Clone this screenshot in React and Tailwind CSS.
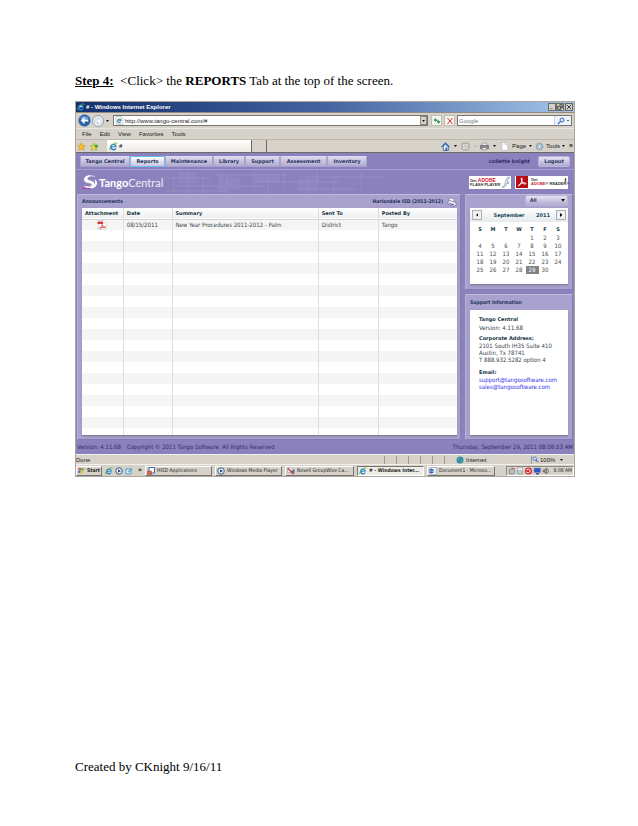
// src/App.jsx
// Step 4 of the handout: the Tango Central home screen inside a browser window.

import React, { useState } from 'react';

const navItems = [
  { label: 'Tango Central', width: 'w-[50px]' },
  { label: 'Reports', width: 'w-[35px]' },
  { label: 'Maintenance', width: 'w-[48px]' },
  { label: 'Library', width: 'w-8' },
  { label: 'Support', width: 'w-[35px]' },
  { label: 'Assessment', width: 'w-[47px]' },
  { label: 'Inventory', width: 'w-10' },
];

const weekDays = ['S', 'M', 'T', 'W', 'T', 'F', 'S'];

// September 2011 starts on a Thursday
const weeks = [
  ['', '', '', '', 1, 2, 3],
  [4, 5, 6, 7, 8, 9, 10],
  [11, 12, 13, 14, 15, 16, 17],
  [18, 19, 20, 21, 22, 23, 24],
  [25, 26, 27, 28, 29, 30, ''],
];

const emptyRows = Array.from({ length: 19 }, (_, i) => i);

const IeIcon = ({ className = 'size-2' }) => (
  <svg viewBox="0 0 16 16" className={`shrink-0 ${className}`} aria-hidden="true">
    <path d="M13.5 9.5H5.2c.2 2 1.500 2.800 3 2.800 1.200 0 2-.5 2.600-1.400h2.500C12.500 13.300 10.600 15 8 15c-3.500 0-6-2.500-6-6s2.500-6 6-6 5.800 2.600 5.500 6.500z" fill="#2f86c8" />
    <path d="M5.300 7.500h5.300C10.300 6 9.400 5.300 8 5.300S5.700 6 5.300 7.500z" fill="#e8f6ff" />
    <path d="M2 14.500C-.5 12 4 5 9 2.500c3-1.500 6-1.500 5.500 1.500" fill="none" stroke="#66ad3e" strokeWidth="1.500" />
  </svg>
);

const PageIcon = () => (
  <svg viewBox="0 0 16 16" className="size-[9px] shrink-0" aria-hidden="true">
    <path d="M3 1h7l4 4v10H3z" fill="#fff" stroke="#a4a8b0" />
    <path d="M10 1v4h4" fill="#dfe6f2" stroke="#a4a8b0" />
    <circle cx="4" cy="6" r="2" fill="#d9dde4" />
  </svg>
);

const SiteIcon = () => (
  <svg viewBox="0 0 16 16" className="size-[9px] shrink-0" aria-hidden="true">
    <path d="M2 1h9l3 3v11H2z" fill="#fff" stroke="#9aa0aa" />
    <path d="M11 8.500H6.500M11 8.500A3.200 3.200 0 1 0 10 11" fill="none" stroke="#2f7fc0" strokeWidth="1.800" />
    <path d="M4 12c0-3 3-7 8-7" fill="none" stroke="#5fa84a" />
  </svg>
);

const MediaIcon = () => (
  <svg viewBox="0 0 16 16" className="size-2 shrink-0" aria-hidden="true">
    <circle cx="8" cy="8" r="6.500" fill="#f2f7fb" stroke="#345a86" strokeWidth="2" />
    <path d="M6 4.500l6 3.500-6 3.500z" fill="#28517f" />
  </svg>
);

const Caret = ({ className = 'w-[3px]' }) => (
  <svg viewBox="0 0 6 4" className={`shrink-0 ${className}`} aria-hidden="true">
    <path d="M0 0h6L3 4z" fill="#111" />
  </svg>
);

const TitleBar = () => (
  <div className="flex h-[10px] items-center bg-linear-to-r from-[#14306f] via-[#44639f] to-[#a5c6e9] px-px">
    <IeIcon />
    <span className="ml-px flex-1 font-['Liberation_Sans',sans-serif] text-[6px] leading-none font-bold text-white">
      # - Windows Internet Explorer
    </span>
    <div className="flex">
      <button type="button" aria-label="Minimize" className="flex h-2 w-2 items-end border border-[#6b6a65] bg-[#d6d2c9] p-px">
        <svg viewBox="0 0 6 5"><path d="M0 4h4v1H0z" /></svg>
      </button>
      <button type="button" aria-label="Restore" className="flex h-2 w-2 items-center border border-[#6b6a65] bg-[#d6d2c9]">
        <svg viewBox="0 0 8 8"><path d="M3 1h4v4H5M1 3h4v4H1z" fill="none" stroke="#111" /></svg>
      </button>
      <button type="button" aria-label="Close" className="ml-px flex h-2 w-2 items-center border border-[#6b6a65] bg-[#d6d2c9]">
        <svg viewBox="0 0 8 8"><path d="M1 1l6 6M7 1L1 7" stroke="#111" /></svg>
      </button>
    </div>
  </div>
);

const AddressBar = () => (
  <div className="flex h-4 items-center border-t border-[#8f8c84] px-[2px] font-['Liberation_Sans',sans-serif]">
    <button type="button" aria-label="Back">
      <svg viewBox="0 0 24 24" className="size-[13px]">
        <circle cx="12" cy="12" r="11" fill="#2360ae" stroke="#8793a5" />
        <path d="M4 8a9 7 0 0116 0c-4 3-12 3-16 0z" fill="#6fa3dc" />
        <path d="M12 5l-7 7 7 7v-5h7v-4h-7z" fill="#fff" />
      </svg>
    </button>
    <button type="button" aria-label="Forward" className="ml-px">
      <svg viewBox="0 0 24 24" className="size-3">
        <circle cx="12" cy="12" r="11" fill="#e9eef4" stroke="#7d8791" strokeWidth="1.500" />
        <path d="M12 5l7 7-7 7v-5H5v-4h7z" fill="#fff" stroke="#93a9c2" />
      </svg>
    </button>
    <Caret className="ml-[2px] w-[3px]" />
    <div className="ml-1 flex h-[11px] flex-1 items-center border border-[#77756f] bg-white pl-px">
      <SiteIcon />
      <input aria-label="Address" defaultValue="http://www.tango-central.com/#" className="w-0 flex-1 pl-px text-[6px] leading-none text-[#222] outline-none" />
      <button type="button" aria-label="Show addresses" className="flex h-[9px] w-[7px] items-center justify-center border border-[#8d8a83] bg-[#d6d2c9]">
        <Caret />
      </button>
    </div>
    <button type="button" aria-label="Refresh" className="ml-[3px] flex size-[11px] items-center justify-center border border-[#c1beb6] bg-[#f4f3ef]">
      <svg viewBox="0 0 16 16" className="size-2">
        <path d="M1 6l5-4v3h3v3H6v2zM15 10l-5 4v-3H8V8h2V6z" fill="#2d9c4d" />
      </svg>
    </button>
    <button type="button" aria-label="Stop" className="ml-[2px] flex size-[11px] items-center justify-center border border-[#c1beb6] bg-[#f4f3ef]">
      <svg viewBox="0 0 16 16" className="size-2">
        <path d="M3 2l10 12M13 2L3 14" stroke="#d03b3b" strokeWidth="2" />
      </svg>
    </button>
    <div className="ml-[2px] flex h-[11px] w-[115px] items-center border border-[#77756f] bg-white">
      <input aria-label="Search" placeholder="Google" className="w-0 flex-1 pl-px text-[6px] leading-none outline-none placeholder:text-[#777]" />
      <button type="button" aria-label="Search Google" className="flex h-[9px] items-center gap-[2px] border-l border-[#c9d3e2] bg-[#eef3fa] px-[2px]">
        <svg viewBox="0 0 16 16" className="size-2">
          <circle cx="10" cy="6" r="4" fill="#dbe9fb" stroke="#3c6fc4" strokeWidth="2" />
          <path d="M7 9l-5 5" stroke="#3c6fc4" strokeWidth="2.500" />
        </svg>
        <Caret className="w-[2px]" />
      </button>
    </div>
  </div>
);

const MenuBar = () => (
  <div className="flex h-[11px] items-center border-t border-[#e9e7e1] pl-[6px] font-['Liberation_Sans',sans-serif] text-[6px] leading-none text-[#222]">
    <div className="flex gap-2">
      {['File', 'Edit', 'View', 'Favorites', 'Tools'].map((item) => (
        <button type="button" key={item}>{item}</button>
      ))}
    </div>
  </div>
);

const ToolBar = () => (
  <div className="flex h-[14px] items-center border-t border-b border-t-[#bcb8ae] border-b-[#6d6a63] pl-px font-['Liberation_Sans',sans-serif] text-[6px] leading-none text-[#222]">
    <button type="button" aria-label="Favorites">
      <svg viewBox="0 0 16 16" className="size-[9px]">
        <path d="M8 1l2 5 5 .5-4 3.500 1.500 5L8 12l-4.500 3L5 10 1 6.500 6 6z" fill="#ffc21f" stroke="#d18a12" />
      </svg>
    </button>
    <button type="button" aria-label="Add to favorites" className="ml-1">
      <svg viewBox="0 0 16 16" className="size-[9px]">
        <path d="M7 2l2 4.500 6 .5-4.500 3.500 1 4.500L7 12.500 2.500 15l1-4.500L0 7l5-.5z" fill="#f4d84a" stroke="#7fa32a" />
        <path d="M10 4h2v2h2v3h-2v2h-2V9H8V6h2z" fill="#3da23a" />
      </svg>
    </button>
    <div className="ml-2 flex h-3 w-[145px] items-center border-r border-[#6d6a63] bg-linear-to-b from-white to-[#edeae4] pl-[2px]">
      <IeIcon className="size-[9px]" />
      <span className="ml-px font-bold">#</span>
    </div>
    <button type="button" aria-label="New tab" className="h-3 w-[15px] border-r border-[#6d6a63]"></button>
    <div className="flex flex-1 items-center justify-end">
      <button type="button" aria-label="Home" className="flex items-center gap-1">
        <svg viewBox="0 0 16 16" className="size-[9px]">
          <path d="M1 8l7-7 7 7h-2v7H4V8z" fill="#e8effa" stroke="#335b9c" strokeWidth="1.500" />
          <path d="M1 8l7-7 7 7-3 1-4-4-4 4z" fill="#4c78bb" />
          <path d="M8 10h3v5H8z" fill="#345a91" />
        </svg>
        <Caret />
      </button>
      <button type="button" aria-label="Feeds" className="ml-1 flex items-center gap-1">
        <svg viewBox="0 0 16 16" className="size-[9px]">
          <rect x="2" y="2" width="12" height="12" rx="2" fill="#dedbd4" stroke="#8e8b84" strokeWidth="1.500" />
          <path d="M5 5a6 6 0 016 6M5 8a3 3 0 013 3" fill="none" stroke="#aaa69e" />
        </svg>
        <span className="text-[#666]">-</span>
      </button>
      <button type="button" aria-label="Print" className="ml-1 flex items-center gap-1">
        <svg viewBox="0 0 16 16" className="size-[9px]">
          <path d="M4 2h8v5H4z" fill="#fff" stroke="#777" />
          <path d="M1 6h14v6H1z" fill="#85898e" stroke="#555" />
          <path d="M4 10h8v4H4z" fill="#e8e8e8" stroke="#777" />
        </svg>
        <Caret />
      </button>
      <button type="button" className="ml-1 flex items-center gap-[3px]">
        <PageIcon />
        Page
        <Caret />
      </button>
      <button type="button" className="ml-[3px] flex items-center gap-[2px]">
        <svg viewBox="0 0 16 16" className="size-[9px]">
          <circle cx="8" cy="8" r="5.500" fill="#c9d8e5" stroke="#7c92a6" strokeWidth="2.500" strokeDasharray="3 1" />
          <circle cx="8" cy="8" r="2" fill="#eef4f8" stroke="#8097ac" />
        </svg>
        Tools
        <Caret />
      </button>
      <span className="ml-1 self-start pr-px text-[7px] font-bold">»</span>
    </div>
  </div>
);

const AppNav = ({ active, onSelect }) => (
  <nav className="flex h-[17px] items-center border-b border-[#a79dd0] px-1 text-[5px] leading-none font-bold text-[#27335c]">
    {navItems.map(({ label, width }) => (
      <button
        type="button"
        key={label}
        onClick={() => onSelect(label)}
        className={`h-[11px] border ${width} ${
          active === label
            ? 'border-[#67bdf0] bg-linear-to-b from-white to-[#c9c4e2]'
            : 'border-[#a8a1c9] border-t-[#e0dcef] bg-linear-to-b from-[#dcd8ec] to-[#b1aad1]'
        }`}
      >
        {label}
      </button>
    ))}
    <span className="ml-auto text-[#302c66]">collette knight</span>
    <button type="button" className="ml-2 h-[11px] w-8 rounded-xs border border-[#b9b3d6] bg-linear-to-b from-[#e6e3f2] to-[#b1aad1]">
      Logout
    </button>
  </nav>
);

const Banner = () => (
  <div className="relative flex h-6 items-center px-[6px]">
    <svg viewBox="0 0 260 24" className="absolute top-0 left-20 h-6 w-[260px]" aria-hidden="true">
      <g stroke="#a9a0d3" strokeWidth="1" opacity=".45" fill="none">
        <path d="M5 8h50M20 16h90M60 5h70M95 12h90M140 19h60M150 7h80M10 21h60" />
        <path d="M18 4v16M32 1v22M47 8v16M65 2v18M71 6v18M98 0v20M112 8v16M128 2v18M152 4v20M161 1v17M178 9v15M205 3v17" />
      </g>
      <g fill="#9c93cb" opacity=".3">
        <path d="M22 2h18v11H22zM62 7h22v13H62zM99 3h25v9H99zM142 9h20v12h-20z" />
      </g>
    </svg>
    <svg viewBox="0 0 32 32" className="size-4 shrink-0" aria-hidden="true">
      <path d="M28 7C20-1 4 2 4 11c0 6 7 7 13 8 4 1 3 4-2 4 8 2 12-3 8-7-3-3-11-3-12-6C10 6 19 2 28 7z" fill="#fff" />
      <path d="M3 23c7 9 24 8 27-3 1-5-2-8-6-9 5 5 1 12-5 13-6 2-11 1-16-1z" fill="#fff" />
      <path d="M0 29h17" stroke="#b13aa8" strokeWidth="2" />
    </svg>
    <span className="ml-px font-[Lato,sans-serif] text-[11px] leading-none text-[#eeecf8]">
      <b className="text-white">Tango</b>Central
    </span>
    <div className="ml-auto flex gap-1">
      <a href="#flash" className="flex h-[13px] w-[42px] items-center bg-white px-px text-[4px] leading-none font-bold text-[#333]">
        <span className="flex-1 font-['Liberation_Sans',sans-serif]">
          <span className="block whitespace-nowrap">Get <span className="text-[5px] text-[#d4202c]">ADOBE</span></span>
          <span className="block whitespace-nowrap">FLASH PLAYER</span>
        </span>
        <svg viewBox="0 0 16 24" className="h-3 w-2 shrink-0" aria-hidden="true">
          <path d="M14 2C8 3 8 10 6 16c-1 4-3 5-5 5v2c5 0 7-3 8-8h4v-3h-3c1-4 2-6 4-6z" fill="#fff" stroke="#7295b0" strokeWidth="1.500" />
        </svg>
      </a>
      <a href="#reader" className="flex h-[13px] w-[53px] items-center bg-white text-[4px] leading-none font-bold text-[#333]">
        <svg viewBox="0 0 24 24" className="ml-px size-3 shrink-0" aria-hidden="true">
          <path d="M0 0h24v24H0z" fill="#b40d16" />
          <path d="M4 20c5-2 9-9 8-16-2-1-2 3 0 7 3 6 7 6 8 4-1-3-11-1-16 5z" fill="none" stroke="#fff" strokeWidth="2" />
        </svg>
        <span className="ml-[3px] flex-1 font-['Liberation_Sans',sans-serif]">
          <span className="flex justify-between pr-[2px]">
            Get
            <svg viewBox="0 0 6 10" className="h-1 w-[3px]" aria-hidden="true">
              <path d="M2 0h2v4h2L3 8 0 4h2zM0 9h6v1H0z" fill="#333" />
            </svg>
          </span>
          <span className="block whitespace-nowrap"><span className="text-[#d4202c]">ADOBE</span>® READER®</span>
        </span>
      </a>
    </div>
  </div>
);

const cell = 'border-r border-[#dededf] px-[3px] py-0 text-left';

const Announcements = () => (
  <section className="min-w-0 flex-1 border border-t-[#c2badb] border-r-[#867bb8] border-b-[#867bb8] border-l-[#b6addb] bg-[#aaa2ce] pr-[3px] pb-[3px] pl-1">
    <div className="flex h-[13px] items-center justify-between text-[5px] leading-none font-bold text-[#27335c]">
      <h2>Announcements</h2>
      <div className="flex items-center gap-1">
        Harlandale ISD (2011-2012)
        <button type="button" aria-label="Print announcements">
          <svg viewBox="0 0 20 20" className="size-[10px]">
            <path d="M5 2l9 2-1 7-9-2z" fill="#fff" stroke="#6f7198" />
            <path d="M2 9l4-2 12 4v5l-4 3L2 14z" fill="#e7e8f0" stroke="#4f5282" />
            <path d="M5 13l9 3" stroke="#4f5282" strokeWidth="2" />
          </svg>
        </button>
      </div>
    </div>
    <div className="border-b border-[#827c9c] bg-white shadow-sm">
      <table className="w-full table-fixed border-collapse text-[6px] leading-none text-[#39424c]">
        <colgroup>
          <col className="w-[11%]" />
          <col className="w-[13%]" />
          <col className="w-[39%]" />
          <col className="w-[16%]" />
          <col className="w-[21%]" />
        </colgroup>
        <thead className="font-['DejaVu_Sans',Verdana,sans-serif] text-[5px]">
          <tr className="h-[11px] border-b border-[#d0d4d6] bg-linear-to-b from-white to-[#edf0f1] text-[#17343f]">
            <th className={`${cell} whitespace-nowrap`}>Attachment</th>
            <th className={cell}>Date</th>
            <th className={cell}>Summary</th>
            <th className={cell}>Sent To</th>
            <th className="px-[3px] py-0 text-left">Posted By</th>
          </tr>
        </thead>
        <tbody>
          <tr className="h-[11px] bg-[#f5f5f5]">
            <td className={cell}>
              <a href="#attachment" aria-label="PDF attachment" className="flex justify-center">
                <svg viewBox="0 0 18 18" className="size-[10px]">
                  <path d="M3 1h9l4 4v12H3z" fill="#fff" stroke="#b5b5b5" />
                  <path d="M1 3h10v4H1z" fill="#cf2a2a" />
                  <path d="M5 15c3-1 5-4 4-7 0 4 3 5 6 5-4 0-7 0-10 2z" fill="none" stroke="#d33" strokeWidth="1.500" />
                </svg>
              </a>
            </td>
            <td className={cell}>08/15/2011</td>
            <td className={`${cell} whitespace-nowrap`}>New Year Procedures 2011-2012 - Palm</td>
            <td className={cell}>District</td>
            <td className="px-[3px] py-0">Tango</td>
          </tr>
          {emptyRows.map((row) => (
            <tr key={row} className="h-[11px] last:h-[7px] even:bg-white odd:bg-[#f5f5f5]">
              <td className={cell}></td>
              <td className={cell}></td>
              <td className={cell}></td>
              <td className={cell}></td>
              <td></td>
            </tr>
          ))}
        </tbody>
      </table>
    </div>
  </section>
);

const Calendar = () => (
  <section className="border border-t-[#c2badb] border-r-[#867bb8] border-b-[#867bb8] border-l-[#b6addb] bg-[#aaa2ce] px-1 pb-1">
    <div className="relative ml-auto flex h-[11px] w-[43px] items-center">
      <select aria-label="Calendar filter" className="h-[11px] w-full appearance-none rounded-xs border border-[#b9b3d6] bg-linear-to-b from-[#e6e3f2] to-[#b1aad1] pl-1 text-[5px] leading-none font-bold text-[#27335c]">
        <option>All</option>
      </select>
      <Caret className="pointer-events-none absolute right-[3px] w-1" />
    </div>
    <div className="mt-[2px] h-[77px] border-b border-[#827c9c] bg-white text-[6px] leading-none text-[#39424c] shadow-sm">
      <div className="flex h-[14px] items-center bg-linear-to-b from-white to-[#e6eaeb] px-[2px] font-['DejaVu_Sans',Verdana,sans-serif] text-[5px] font-bold text-[#17445a]">
        <button type="button" aria-label="Previous month" className="flex size-[10px] items-center justify-center border border-[#aab0b3] bg-[#eef0f1]">
          <svg viewBox="0 0 4 6" className="h-1"><path d="M4 0v6L0 3z" /></svg>
        </button>
        <span className="flex-1 text-center">September</span>
        <span className="mr-[6px]">2011</span>
        <button type="button" aria-label="Next month" className="flex size-[10px] items-center justify-center border border-[#aab0b3] bg-[#eef0f1]">
          <svg viewBox="0 0 4 6" className="h-1"><path d="M0 0v6l4-3z" /></svg>
        </button>
      </div>
      <table className="mx-auto mt-[3px] w-[91px] table-fixed text-center">
        <thead className="font-['DejaVu_Sans',Verdana,sans-serif] text-[5px]">
          <tr className="h-[9px] text-[#17343f]">
            {weekDays.map((day, i) => (
              <th key={i} className="p-0">{day}</th>
            ))}
          </tr>
        </thead>
        <tbody>
          {weeks.map((week, i) => (
            <tr key={i} className="h-2 text-[#4b4b4b]">
              {week.map((day, j) => (
                <td key={j} className={day === 29 ? 'bg-[#818181] p-0 text-white' : 'p-0'}>{day}</td>
              ))}
            </tr>
          ))}
        </tbody>
      </table>
    </div>
  </section>
);

const infoHeading = "block font-['DejaVu_Sans',Verdana,sans-serif] text-[5px] text-[#17343f]";

const SupportInfo = () => (
  <section className="flex flex-1 flex-col border border-t-[#c2badb] border-r-[#867bb8] border-b-[#867bb8] border-l-[#b6addb] bg-[#aaa2ce] px-1 pb-[3px]">
    <h2 className="flex h-[15px] items-center text-[5px] leading-none font-bold text-[#27335c]">
      Support Information
    </h2>
    <div className="flex-1 border-b border-[#827c9c] bg-white pt-[6px] pl-[9px] font-['DejaVu_Sans_Condensed','DejaVu_Sans',sans-serif] text-[6px] leading-[7px] whitespace-nowrap text-[#39424c] shadow-sm">
      <b className={infoHeading}>Tango Central</b>
      <p className="mt-px">Version: 4.11.68</p>
      <b className={`mt-1 ${infoHeading}`}>Corporate Address:</b>
      <p>2101 South IH35 Suite 410</p>
      <p>Austin, Tx 78741</p>
      <p>T 888.932.5282 option 4</p>
      <b className={`mt-[6px] ${infoHeading}`}>Email:</b>
      <a href="mailto:support@tangosoftware.com" className="block text-[#3030e8]">support@tangosoftware.com</a>
      <a href="mailto:sales@tangosoftware.com" className="block text-[#3030e8]">sales@tangosoftware.com</a>
    </div>
  </section>
);

const TangoApp = () => {
  const [active, setActive] = useState('Reports');

  return (
    <main className="bg-[#8b81bd] font-['DejaVu_Sans',Verdana,sans-serif]">
      <AppNav active={active} onSelect={setActive} />
      <Banner />
      <div className="flex gap-1 px-px font-['DejaVu_Sans_Condensed','DejaVu_Sans',sans-serif]">
        <Announcements />
        <div className="flex w-[108px] flex-col gap-1">
          <Calendar />
          <SupportInfo />
        </div>
      </div>
      <div className="flex h-[14px] items-center gap-[6px] px-px font-['DejaVu_Sans_Condensed','DejaVu_Sans',sans-serif] text-[6px] leading-none text-[#302c66]">
        <span>Version: 4.11.68</span>
        <span>Copyright © 2011 Tango Software, All Rights Reserved</span>
        <span className="ml-auto">Thursday, September 29, 2011 08:08:53 AM</span>
      </div>
    </main>
  );
};

const StatusBar = () => (
  <div className="flex h-[10px] items-center border-t border-[#f3f1ec] font-['Liberation_Sans',sans-serif] text-[6px] leading-none text-[#222]">
    <span className="flex-1">Done</span>
    {[1, 2, 3, 4, 5, 6].map((pane) => (
      <span key={pane} className="h-2 w-3 border-l border-[#9f9b92]"></span>
    ))}
    <span className="flex w-[75px] items-center gap-[2px]">
      <svg viewBox="0 0 16 16" className="size-2" aria-hidden="true">
        <circle cx="8" cy="8" r="7" fill="#2f83be" />
        <path d="M3 3c4-3 6 0 4 3S4 9 2 8zM9 8c4-1 5 1 3 4l-4 2z" fill="#4fb45a" />
      </svg>
      Internet
    </span>
    <button type="button" className="flex h-2 w-[43px] items-center gap-px border-l border-[#9f9b92]">
      <svg viewBox="0 0 16 16" className="size-[7px]">
        <circle cx="6" cy="6" r="4" fill="#d9e8fa" stroke="#3c6fc4" strokeWidth="2" />
        <path d="M9 9l5 5" stroke="#3c6fc4" strokeWidth="2.500" />
      </svg>
      100%
      <Caret className="ml-1 w-[3px]" />
    </button>
  </div>
);

const taskButton =
  'flex h-[10px] min-w-0 items-center gap-[2px] border border-t-white border-l-white border-r-[#77746d] border-b-[#77746d] px-px whitespace-nowrap';

const TaskBar = () => (
  <div className="flex h-3 items-center gap-[3px] border-t border-[#f3f1ec] text-[5px] leading-none text-[#222]">
    <button type="button" className={`${taskButton} w-[26px] font-bold`}>
      <svg viewBox="0 0 16 16" className="size-[7px] shrink-0">
        <path d="M2 3c2-2 4-1 5 0L6 8C5 7 3 6 1 8z" fill="#e0482c" />
        <path d="M8 3c2 1 4 1 6-1l-1 5c-2 2-4 1-6 1z" fill="#4ca443" />
        <path d="M1 9c2-2 4-1 5 0l-1 5c-2-1-4-1-5 0z" fill="#3470cb" />
        <path d="M7 9c2 1 4 1 6-1l-1 6c-2 1-4 1-6 0z" fill="#f0c331" />
      </svg>
      Start
    </button>
    <div className="flex items-center gap-[2px]">
      <IeIcon />
      <MediaIcon />
      <svg viewBox="0 0 16 16" className="size-2" aria-hidden="true">
        <path d="M2 4h10v10H2z" fill="#d8edfb" stroke="#3486ba" strokeWidth="1.500" />
        <path d="M6 9l7-7 2 2-7 7H6z" fill="#5aa6d0" />
      </svg>
      <span className="pl-[3px] text-[7px] font-bold">»</span>
    </div>
    <button type="button" className={`${taskButton} w-[67px]`}>
      <svg viewBox="0 0 16 16" className="size-2 shrink-0">
        <path d="M4 1h11v11H4z" fill="#fff" stroke="#3b65a4" strokeWidth="2" />
        <path d="M1 8h8v7H1z" fill="#e35d4c" stroke="#983c35" />
      </svg>
      HISD Applications
    </button>
    <button type="button" className={`${taskButton} w-[67px]`}>
      <MediaIcon />
      Windows Media Player
    </button>
    <button type="button" className={`${taskButton} w-[69px]`}>
      <svg viewBox="0 0 16 16" className="size-2 shrink-0">
        <path d="M1 2h9v9H1z" fill="#fff" stroke="#7d8da5" />
        <path d="M2 3l11 11" stroke="#d52f36" strokeWidth="3" />
        <path d="M9 8l6-4v9z" fill="#3e6fae" />
      </svg>
      Novell GroupWise Ca...
    </button>
    <button type="button" className="flex h-[10px] w-[67px] min-w-0 items-center gap-[2px] border border-t-[#77746d] border-r-white border-b-white border-l-[#77746d] bg-[#efede8] px-px font-bold whitespace-nowrap">
      <IeIcon />
      # - Windows Inter...
    </button>
    <button type="button" className={`${taskButton} w-[68px]`}>
      <svg viewBox="0 0 16 16" className="size-2 shrink-0">
        <path d="M5 1h10v14H5z" fill="#fff" stroke="#6382b3" />
        <path d="M1 4h8v8H1z" fill="#2f60b8" />
        <path d="M2 6l1 4 2-3 2 3 1-4M10 4h4M10 7h4M10 10h4" fill="none" stroke="#bdd2f3" />
      </svg>
      Document1 - Microso...
    </button>
    <div className="ml-auto flex h-[10px] items-center border border-t-[#8d8a83] border-r-white border-b-white border-l-[#8d8a83] px-px">
      <svg viewBox="0 0 84 16" className="h-2 w-[42px]" aria-hidden="true">
        <path d="M2 5l8-2 4 5-3 6H3z" fill="#b9bcc3" stroke="#555a64" />
        <path d="M7 2l6 2" stroke="#d34c3e" strokeWidth="2" />
        <path d="M19 2h10v12H19z" fill="#fff" stroke="#838991" />
        <circle cx="24" cy="10" r="4" fill="#c4d5ce" stroke="#6d8880" />
        <circle cx="41" cy="8" r="7" fill="#d72a31" />
        <path d="M37 6l4-2 4 4-4 4-4-2" fill="none" stroke="#fff" strokeWidth="2" />
        <path d="M52 2h13v9H52z" fill="#3355c3" stroke="#8490b9" />
        <path d="M56 12h6v3h-6z" fill="#6d3fa3" />
        <path d="M70 6h3l4-4v12l-4-4h-3z" fill="#999" stroke="#555" />
        <circle cx="77" cy="8" r="4" fill="none" stroke="#777" strokeWidth="2" />
      </svg>
      <span className="ml-1 whitespace-nowrap">8:08 AM</span>
    </div>
  </div>
);

export default function App() {
  return (
    <div className="flex min-h-screen flex-col bg-white pt-[73px] pr-[63px] pb-[51px] pl-[75px] font-['Liberation_Serif',serif] text-[13px] leading-4 text-black">
      <h1 className="whitespace-pre-wrap">
        <b className="underline">Step 4:</b>{'  '}&lt;Click&gt; the <b>REPORTS</b> Tab at the top of the screen.
      </h1>
      <div className="mt-3 border border-[#aaa69d] bg-[#d6d2c9] font-['DejaVu_Sans_Condensed','DejaVu_Sans',sans-serif]">
        <TitleBar />
        <AddressBar />
        <MenuBar />
        <ToolBar />
        <TangoApp />
        <StatusBar />
        <TaskBar />
      </div>
      <footer className="mt-auto">Created by CKnight 9/16/11</footer>
    </div>
  );
}
